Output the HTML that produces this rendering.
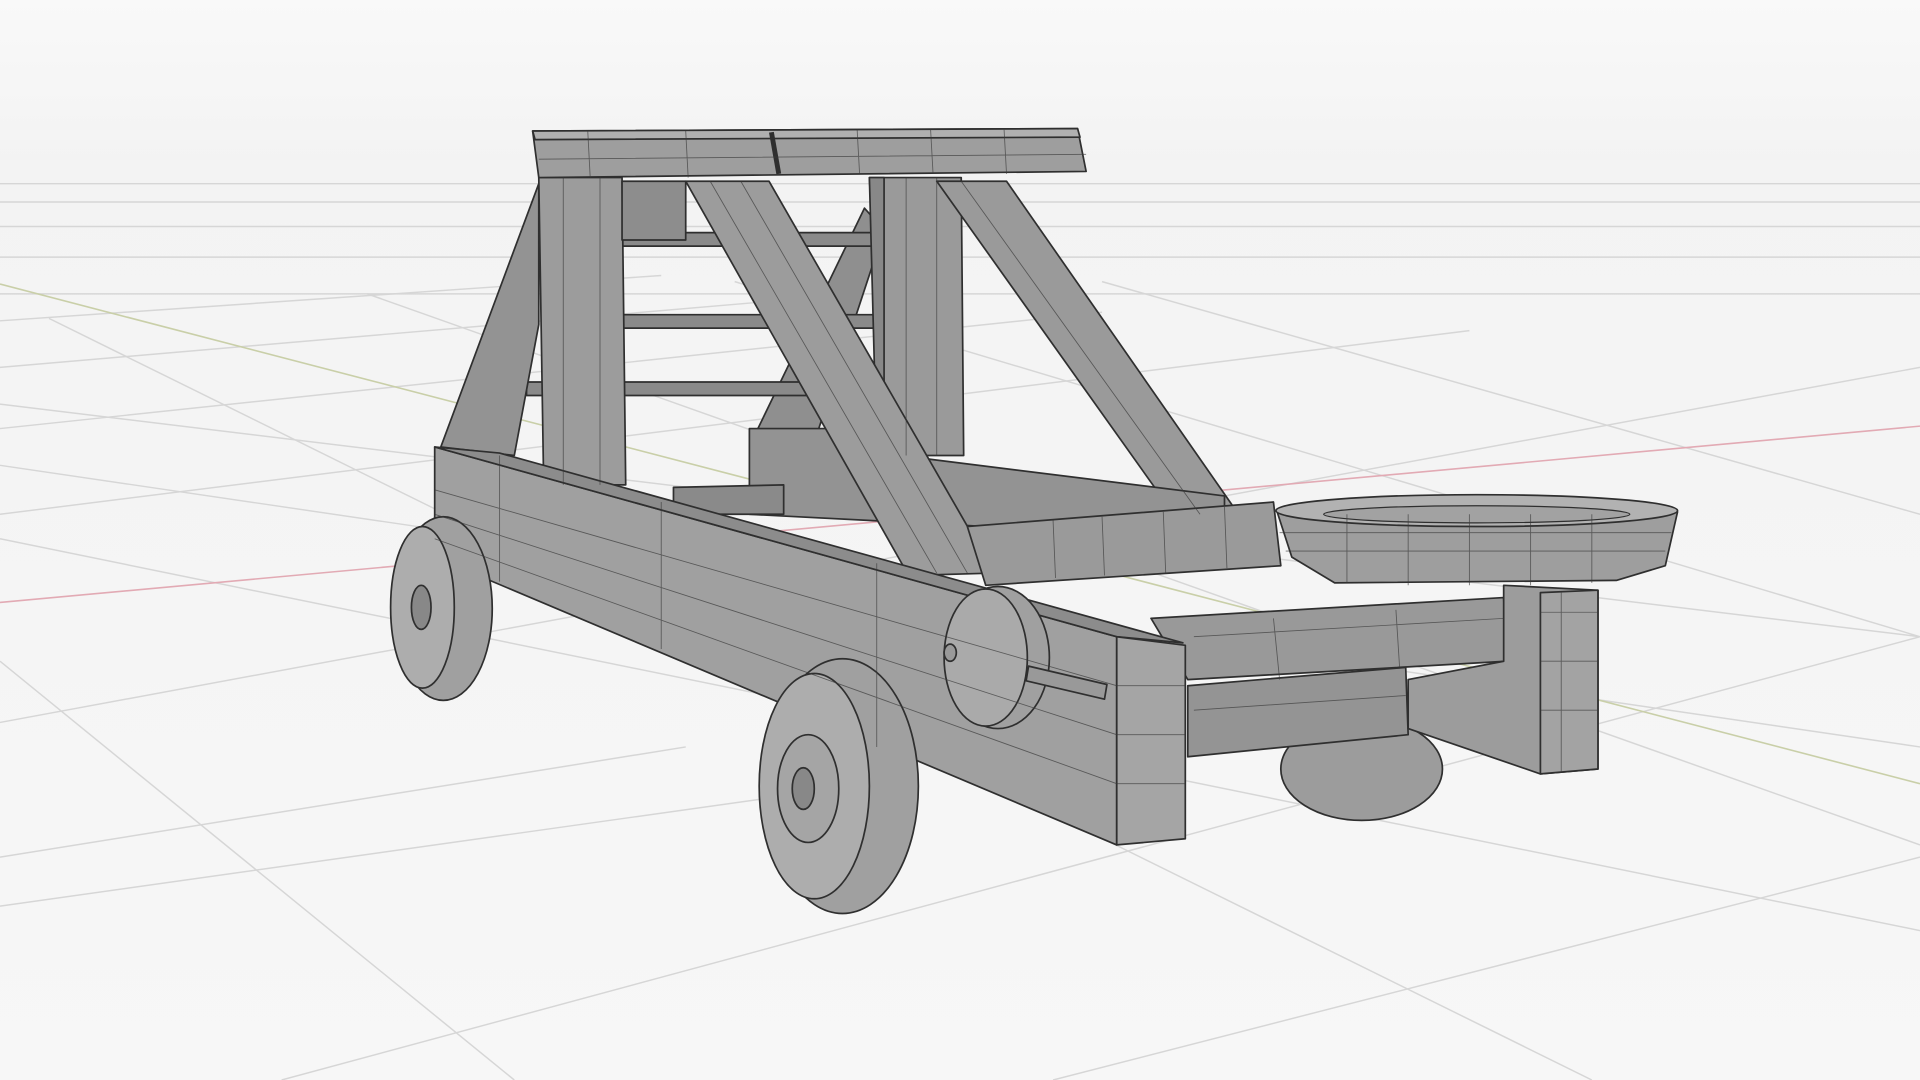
<!DOCTYPE html>
<html><head><meta charset="utf-8"><style>
html,body{margin:0;padding:0;width:1920px;height:1080px;overflow:hidden;background:#f6f6f6}
svg{display:block}
</style></head><body>
<svg width="1920" height="1080" viewBox="0 0 1568 882" preserveAspectRatio="none" xmlns="http://www.w3.org/2000/svg">
<defs>
<linearGradient id="bg" x1="0" y1="0" x2="0" y2="1">
<stop offset="0" stop-color="#f9f9f9"/><stop offset="0.15" stop-color="#f3f3f3"/><stop offset="1" stop-color="#f7f7f7"/>
</linearGradient>
</defs>
<rect width="1568" height="882" fill="url(#bg)"/>
<g stroke="#d6d6d6" stroke-width="1.2" fill="none">
<path d="M0 150 L1568 150 M0 165 L1568 165 M0 185 L1568 185 M0 210 L1568 210 M0 240 L1568 240"/>
<path d="M0 262 L540 225 M0 300 L700 240 M0 350 L900 255 M0 420 L1200 270 M0 590 L1568 300 M230 882 L1568 520 M860 882 L1568 700"/>
<path d="M0 330 L1568 520 M0 380 L1568 610 M0 440 L1568 760 M0 540 L420 882 M40 260 L1300 882 M300 240 L1568 690 M600 230 L1568 520 M900 230 L1568 420"/>
<path d="M0 740 L640 650 M0 700 L560 610"/>
</g>
<path d="M0 232 L1568 640" stroke="#c9cfa8" stroke-width="1.3"/>
<path d="M0 492 L1568 348" stroke="#e2aab4" stroke-width="1.3"/>
<g stroke="#2f2f2f" stroke-width="1.4" stroke-linejoin="round">
<!-- rear wheel -->
<ellipse cx="1112" cy="628" rx="66" ry="42" fill="#9c9c9c"/>
<!-- back diagonal -->
<polygon points="706,170 722,188 668,352 618,352" fill="#8f8f8f"/>
<!-- rods -->
<rect x="508" y="190" width="210" height="11" fill="#8a8a8a"/>
<rect x="508" y="257" width="210" height="11" fill="#8a8a8a"/>
<rect x="430" y="312" width="290" height="11" fill="#8a8a8a"/>
<!-- right post -->
<polygon points="710,145 785,145 787,372 722,372" fill="#9a9a9a"/>
<polygon points="710,145 722,145 722,372 716,372" fill="#888"/>
<!-- right diagonal -->
<polygon points="765,148 822,148 1008,415 960,422" fill="#9a9a9a"/>
<!-- left diagonal -->
<polygon points="440,150 360,365 420,372 440,265" fill="#939393"/>
<!-- left post -->
<polygon points="440,145 508,145 511,396 444,396" fill="#9c9c9c"/>
<rect x="508" y="148" width="52" height="48" fill="#8d8d8d"/>
<!-- top beam -->
<polygon points="435,107 880,105 887,140 440,145" fill="#9e9e9e"/>
<polygon points="435,107 880,105 882,112 437,114" fill="#b0b0b0"/>
<line x1="630" y1="108" x2="636" y2="142" stroke-width="4"/>
<!-- inner base pieces -->
<polygon points="612,350 720,350 735,372 1000,405 1000,440 612,420" fill="#939393"/>
<polygon points="550,398 640,396 640,420 550,420" fill="#8a8a8a"/>
<!-- front diagonal -->
<polygon points="560,148 628,148 812,468 742,470" fill="#9c9c9c"/>
<!-- cross arm -->
<polygon points="790,430 1040,410 1046,462 805,478" fill="#9a9a9a"/>
<!-- rear beams -->
<polygon points="940,505 1228,488 1230,540 970,555" fill="#999"/>
<polygon points="970,560 1148,545 1150,600 970,618" fill="#949494"/>
<polygon points="1228,478 1305,482 1305,628 1258,632 1150,595 1150,555 1228,540" fill="#9c9c9c"/>
<polygon points="1258,484 1305,482 1305,628 1258,632" fill="#a3a3a3"/>
<!-- main left beam -->
<polygon points="355,365 912,520 912,690 355,455" fill="#a0a0a0"/>
<polygon points="355,365 408,370 966,525 912,520" fill="#8c8c8c"/>
<polygon points="912,520 968,527 968,685 912,690" fill="#a5a5a5"/>
<!-- cup -->
<polygon points="1043,418 1370,418 1360,462 1320,474 1090,476 1055,455" fill="#9e9e9e"/>
<ellipse cx="1206" cy="417" rx="164" ry="13" fill="#b2b2b2"/>
<ellipse cx="1206" cy="420" rx="125" ry="7" fill="#a2a2a2" stroke-width="1"/>
<!-- front left wheel -->
<ellipse cx="362" cy="497" rx="40" ry="75" fill="#a0a0a0"/>
<ellipse cx="345" cy="496" rx="26" ry="66" fill="#adadad"/>
<ellipse cx="344" cy="496" rx="8" ry="18" fill="#888"/>
<!-- front wheel -->
<ellipse cx="688" cy="642" rx="62" ry="104" fill="#a0a0a0"/>
<ellipse cx="665" cy="642" rx="45" ry="92" fill="#adadad"/>
<ellipse cx="660" cy="644" rx="25" ry="44" fill="#a5a5a5"/>
<ellipse cx="656" cy="644" rx="9" ry="17" fill="#888"/>
<!-- axle cap -->
<ellipse cx="815" cy="537" rx="42" ry="58" fill="#a0a0a0"/>
<ellipse cx="805" cy="537" rx="34" ry="56" fill="#aaa"/>
<ellipse cx="776" cy="533" rx="5" ry="7" fill="#999"/>
<!-- axle rod -->
<polygon points="840,544 904,559 902,571 838,556" fill="#999"/>
</g>
<g stroke="#3a3a3a" stroke-width="0.7" fill="none" opacity="0.7">
<path d="M408 372 L408 475 M540 410 L540 530 M716 460 L716 610 M355 400 L912 560 M355 420 L912 600 M355 440 L912 640 M912 560 L968 560 M912 600 L968 600 M912 640 L968 640"/>
<path d="M460 145 L460 396 M490 145 L490 396 M740 145 L740 372 M765 145 L765 372 M580 148 L765 468 M605 148 L790 468 M785 148 L980 420 M440 130 L887 126 M480 107 L482 145 M560 107 L562 145 M700 106 L702 142 M760 106 L762 142 M820 106 L822 142"/>
<path d="M1045 435 L1365 435 M1050 450 L1360 450 M1100 420 L1100 476 M1150 420 L1150 478 M1200 420 L1200 478 M1250 420 L1250 478 M1300 420 L1300 476"/>
<path d="M860 425 L862 472 M900 422 L902 470 M950 418 L952 468 M1000 414 L1002 464 M975 520 L1228 505 M975 580 L1148 568 M1040 505 L1045 555 M1140 498 L1143 545"/>
<path d="M1258 500 L1305 500 M1258 540 L1305 540 M1258 580 L1305 580 M1275 484 L1275 630"/>
</g>
</svg>
</body></html>
